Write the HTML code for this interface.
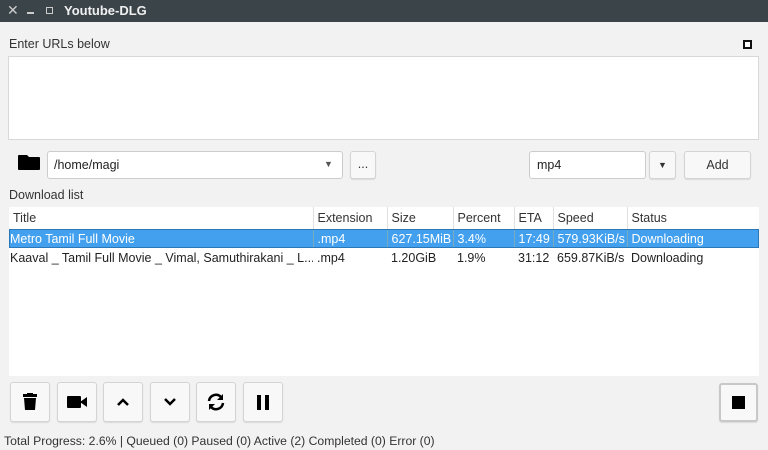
<!DOCTYPE html>
<html><head><style>
body{margin:0;width:768px;height:450px;background:#f2f2f2;font-family:"Liberation Sans",sans-serif;font-size:12.5px;color:#333;position:relative;overflow:hidden}
.a{position:absolute}
.tb{left:0;top:0;width:768px;height:22px;background:#3b4449;color:#fff}
.btn{position:absolute;background:#f8f8f8;border:1px solid #d4d4d4;border-radius:3px;box-shadow:0 1px 1px rgba(0,0,0,.1);box-sizing:border-box}
.in{position:absolute;background:#fff;border:1px solid #ccc;border-radius:3px;box-sizing:border-box}
table{border-collapse:collapse;font-size:12.5px}
td{padding:0 0 0 4px;white-space:nowrap;overflow:hidden}
.ib{width:40px;height:40px;top:382px;display:flex;align-items:center;justify-content:center}
</style></head><body>
<div class="a tb">
<span class="a" style="left:7px;top:2px;font-size:14px;color:#ccc">✕</span>
<span class="a" style="left:27px;top:12px;width:7px;height:2px;background:#ccc"></span>
<span class="a" style="left:46px;top:7px;width:5px;height:5px;border:1.5px solid #ccc"></span>
<span class="a" style="left:64px;top:3px;font-weight:bold;font-size:13px;color:#f0f0f0">Youtube-DLG</span>
</div>
<div class="a" style="left:9px;top:37px">Enter URLs below</div>
<div class="a" style="left:743px;top:40px;width:5px;height:5px;border:2px solid #111;background:#fff"></div>
<div class="a" style="left:8px;top:56px;width:751px;height:84px;background:#fff;border:1px solid #d8d8d8;box-sizing:border-box"></div>
<svg class="a" style="left:18px;top:153px" width="23" height="18"><path d="M1 2h8l2 2h10a1 1 0 0 1 1 1v11a1 1 0 0 1-1 1H1a1 1 0 0 1-1-1V3a1 1 0 0 1 1-1z" fill="#000"/></svg>
<div class="in" style="left:47px;top:151px;width:296px;height:28px"><span class="a" style="left:6px;top:6px;color:#222">/home/magi</span><span class="a" style="left:276px;top:7px;font-size:9px;color:#555">▼</span></div>
<div class="btn" style="left:350px;top:151px;width:26px;height:28px;text-align:center;line-height:24px">...</div>
<div class="in" style="left:529px;top:151px;width:117px;height:28px"><span class="a" style="left:7px;top:6px;color:#222">mp4</span></div>
<div class="btn" style="left:649px;top:151px;width:27px;height:28px;text-align:center;line-height:26px;font-size:9px">▼</div>
<div class="btn" style="left:684px;top:151px;width:67px;height:28px;text-align:center;line-height:26px">Add</div>
<div class="a" style="left:9px;top:188px">Download list</div>
<div class="a" style="left:9px;top:207px;width:750px;height:169px;background:#fff">
<table style="width:750px;table-layout:fixed;background:#fff">
<colgroup><col style="width:304px"><col style="width:74px"><col style="width:66px"><col style="width:61px"><col style="width:39px"><col style="width:74px"><col></colgroup>
<tr style="height:22px;color:#333;background:#fff"><td style="border-right:1px solid #e0e0e0">Title</td><td style="border-right:1px solid #e0e0e0">Extension</td><td style="border-right:1px solid #e0e0e0">Size</td><td style="border-right:1px solid #e0e0e0">Percent</td><td style="border-right:1px solid #e0e0e0">ETA</td><td style="border-right:1px solid #e0e0e0">Speed</td><td>Status</td></tr>
<tr style="height:19px;background:#43a0ee;color:#fff;outline:1px solid #2a78b8;outline-offset:-1px"><td style="padding-left:1px;border-right:1px solid #7ab">Metro Tamil Full Movie</td><td style="border-right:1px solid #7ab">.mp4</td><td style="border-right:1px solid #7ab">627.15MiB</td><td style="border-right:1px solid #7ab">3.4%</td><td style="border-right:1px solid #7ab">17:49</td><td style="border-right:1px solid #7ab">579.93KiB/s</td><td>Downloading</td></tr>
<tr style="height:19px;color:#222"><td style="padding-left:1px">Kaaval _ Tamil Full Movie _ Vimal, Samuthirakani _ L...</td><td>.mp4</td><td>1.20GiB</td><td>1.9%</td><td>31:12</td><td>659.87KiB/s</td><td>Downloading</td></tr>
</table></div>
<div class="btn ib" style="left:10px"><svg width="14" height="18"><rect x="0" y="1" width="14" height="3" fill="#000"/><rect x="4" y="0" width="6" height="2" fill="#000"/><path d="M1 5h12l-1 12H2z" fill="#000"/></svg></div>
<div class="btn ib" style="left:57px"><svg width="20" height="12"><rect x="0" y="0" width="14" height="12" rx="1" fill="#000"/><path d="M13 6l7-5v10z" fill="#000"/></svg></div>
<div class="btn ib" style="left:103px"><svg width="12" height="8"><path d="M1 7l5-5 5 5" stroke="#000" stroke-width="2.5" fill="none"/></svg></div>
<div class="btn ib" style="left:150px"><svg width="12" height="8"><path d="M1 1l5 5 5-5" stroke="#000" stroke-width="2.5" fill="none"/></svg></div>
<div class="btn ib" style="left:196px"><svg width="20" height="18"><path d="M3 8a7 7 0 0 1 12-4" stroke="#000" stroke-width="2.5" fill="none"/><path d="M17 1v6h-6z" fill="#000"/><path d="M17 10a7 7 0 0 1-12 4" stroke="#000" stroke-width="2.5" fill="none"/><path d="M3 17v-6h6z" fill="#000"/></svg></div>
<div class="btn ib" style="left:243px"><svg width="12" height="15"><rect x="0" y="0" width="4" height="15" fill="#000"/><rect x="8" y="0" width="4" height="15" fill="#000"/></svg></div>
<div class="btn ib" style="left:719px;top:383px;width:39px;height:39px;border:2px solid #c8c8c8"><div style="width:13px;height:13px;background:#000"></div></div>
<div class="a" style="left:4px;top:434px;color:#333;font-size:12.2px">Total Progress: 2.6% | Queued (0) Paused (0) Active (2) Completed (0) Error (0)</div>
</body></html>
